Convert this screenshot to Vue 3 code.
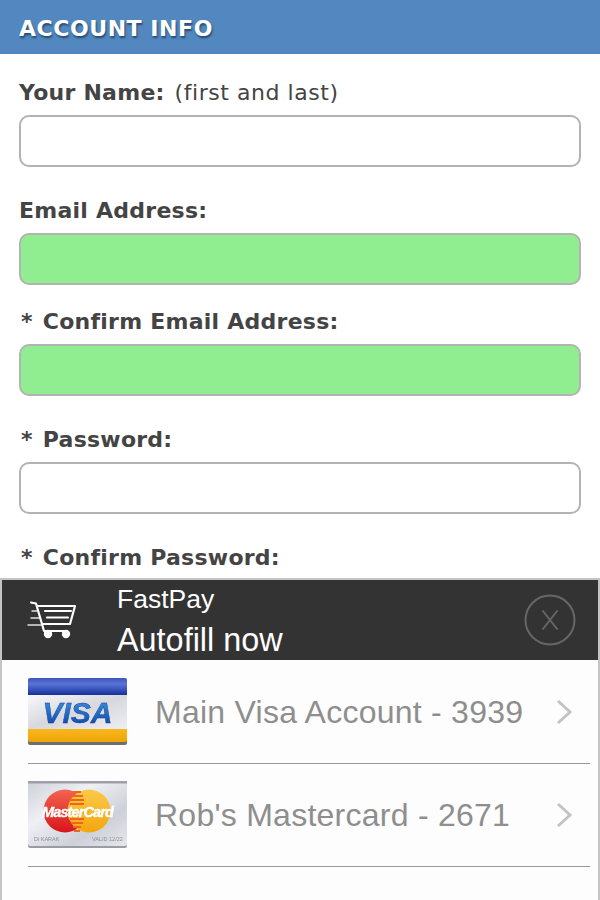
<script setup>
const fields = [
  { label: 'Your Name:', note: '(first and last)', filled: false },
  { label: 'Email Address:', filled: true, tight: true },
  { label: 'Confirm Email Address:', filled: true, star: true },
  { label: 'Password:', filled: false, star: true },
]
</script>

<template>
  <div class="page">
    <header class="band">ACCOUNT INFO</header>
    <form class="form">
      <div v-for="f in fields" :key="f.label" class="field" :class="{ tight: f.tight }">
        <div class="label" :class="{ star: f.star }"><b v-if="f.star" class="mark">*</b><b>{{ f.label }}</b><span v-if="f.note" class="note">{{ f.note }}</span></div>
        <div class="input" :class="{ filled: f.filled }"></div>
      </div>
      <div class="label star"><b class="mark">*</b><b>Confirm Password:</b></div>
    </form>

    <section class="sheet">
      <div class="sheet-head">
        <svg class="cart" viewBox="0 0 50 42" fill="none" stroke="#fff" stroke-linecap="round" stroke-linejoin="round">
          <path d="M5 3.5 L10 4.5 L18 32 H40" stroke-width="2.2"/>
          <path d="M11 7 H49 L44 25 H17" stroke-width="2.2"/>
          <path d="M19 12 H45 M21 18.5 H42" stroke-width="2.2"/>
          <path d="M6 12 H11 M5 19 H14 M2 26 H15" stroke-width="1.4" opacity=".85"/>
          <circle cx="22" cy="35" r="4.2" fill="#fff" stroke="none"/>
          <circle cx="40" cy="35" r="4.2" fill="#fff" stroke="none"/>
        </svg>
        <div class="titles">
          <div class="brand">FastPay</div>
          <div class="action">Autofill now</div>
        </div>
        <svg class="close" viewBox="0 0 52 52" fill="none" stroke="#666">
          <circle cx="26" cy="26" r="24.5" stroke-width="2"/>
          <path d="M18.5 16.5 L33.5 35.5 M33.5 16.5 L18.5 35.5" stroke-width="2"/>
        </svg>
      </div>

      <ul class="accounts">
        <li class="account">
          <svg class="card" viewBox="0 0 99 67">
            <defs>
              <linearGradient id="vb" x1="0" y1="0" x2="0" y2="1">
                <stop offset="0" stop-color="#3d55b8"/><stop offset=".35" stop-color="#5a74d6"/><stop offset="1" stop-color="#15309c"/>
              </linearGradient>
              <linearGradient id="vs" x1="0" y1="0" x2="1" y2="1">
                <stop offset="0" stop-color="#f8f8fa"/><stop offset=".5" stop-color="#d6d8de"/><stop offset="1" stop-color="#eeeff2"/>
              </linearGradient>
              <linearGradient id="vo" x1="0" y1="0" x2="0" y2="1">
                <stop offset="0" stop-color="#f9b71c"/><stop offset="1" stop-color="#eea408"/>
              </linearGradient>
              <linearGradient id="vt" x1="0" y1="0" x2="0" y2="1">
                <stop offset="0" stop-color="#3f9be8"/><stop offset="1" stop-color="#0c3fa6"/>
              </linearGradient>
            </defs>
            <rect x="0" y="1" width="99" height="66" rx="2" fill="#6e6e6e"/>
            <path d="M2 0 H97 a2 2 0 0 1 2 2 V17 H0 V2 a2 2 0 0 1 2 -2Z" fill="url(#vb)"/>
            <rect x="0" y="17" width="99" height="34" fill="url(#vs)"/>
            <path d="M0 51 H99 V62 a2 2 0 0 1 -2 2 H2 a2 2 0 0 1 -2 -2Z" fill="url(#vo)"/>
            <text x="49.5" y="45" class="visa">VISA</text>
          </svg>
          <span class="name">Main Visa Account - 3939</span>
          <svg class="chev" viewBox="0 0 16 26" fill="none" stroke="#c4c4c4" stroke-width="3"><path d="M2 2 L14 13 L2 24"/></svg>
        </li>
        <li class="account">
          <svg class="card" viewBox="0 0 99 67">
            <defs>
              <linearGradient id="ms" x1="0" y1="0" x2="1" y2="1">
                <stop offset="0" stop-color="#cdd0d8"/><stop offset=".35" stop-color="#eff0f4"/><stop offset=".7" stop-color="#ced0d9"/><stop offset="1" stop-color="#e6e7ec"/>
              </linearGradient>
              <linearGradient id="mr" x1="0" y1="0" x2="0" y2="1">
                <stop offset="0" stop-color="#f2654f"/><stop offset="1" stop-color="#d9141c"/>
              </linearGradient>
              <linearGradient id="my" x1="0" y1="0" x2="0" y2="1">
                <stop offset="0" stop-color="#fbc94a"/><stop offset="1" stop-color="#f4a60d"/>
              </linearGradient>
            </defs>
            <rect x="0" y="1" width="99" height="66" rx="2" fill="#9a9ca2"/>
            <rect x="0" y="0" width="99" height="65" rx="2" fill="url(#ms)"/>
            <rect x="0" y="0" width="99" height="2.5" fill="#9da0a6"/>
            <circle cx="37" cy="30" r="21.5" fill="url(#mr)"/>
            <circle cx="61" cy="30" r="21.5" fill="url(#my)"/>
            <path d="M45 11 H53 M43 15 H55 M42 19 H56 M42 23 H56 M42 38 H56 M43 42 H55 M45 46 H53 M46 50 H52" stroke="#f0641e" stroke-width="2"/>
            <text x="49.5" y="36" class="mc">MasterCard</text>
            <text x="6" y="60" class="tiny">Di KARAK</text>
            <text x="64" y="60" class="tiny">VALID 12/22</text>
          </svg>
          <span class="name">Rob's Mastercard - 2671</span>
          <svg class="chev" viewBox="0 0 16 26" fill="none" stroke="#c4c4c4" stroke-width="3"><path d="M2 2 L14 13 L2 24"/></svg>
        </li>
      </ul>
    </section>
  </div>
</template>

<style>
html, body { margin: 0; background: #fff; }
</style>

<style scoped>
.page {
  position: relative;
  width: 600px;
  height: 900px;
  overflow: hidden;
  background: #fff;
  font-family: "DejaVu Sans", sans-serif;
}
.band {
  height: 54px;
  box-sizing: border-box;
  padding-left: 19px;
  background: #5288bf;
  color: #fff;
  font-size: 22px;
  font-weight: 700;
  line-height: 57px;
  letter-spacing: 0.55px;
  text-shadow: 1px 2px 2px #274a70;
}
.form { padding: 23px 19px 0; }
.field { margin-bottom: 28px; }
.field.tight { margin-bottom: 21px; }
.label {
  height: 30px;
  margin-bottom: 8px;
  color: #444;
  font-size: 22px;
  line-height: 32px;
  letter-spacing: 0.25px;
  white-space: nowrap;
}
.label.star { padding-left: 2px; }
.mark { margin-right: 10px; }
.note { margin-left: 10px; font-weight: 400; letter-spacing: 0.55px; }
.input {
  box-sizing: border-box;
  height: 52px;
  border: 2px solid #b3b3b3;
  border-radius: 10px;
  background: #fff;
}
.input.filled { background: #90ee90; }

.sheet {
  position: absolute;
  left: 0;
  right: 0;
  top: 578px;
  bottom: 0;
  box-sizing: border-box;
  border: 2px solid #c4c4c4;
  border-bottom: 0;
  background: #fdfdfd;
  font-family: "Liberation Sans", sans-serif;
}
.sheet-head {
  display: flex;
  align-items: center;
  height: 80px;
  background: #333;
  color: #fff;
}
.cart { width: 50px; height: 42px; margin-left: 24px; flex: none; }
.titles { margin-left: 41px; flex: 1; padding-top: 3px; }
.brand { font-size: 26.5px; line-height: 37px; }
.action { font-size: 32.4px; line-height: 44px; }
.close { width: 52px; height: 52px; margin-right: 22px; flex: none; }
.accounts { list-style: none; margin: 0; padding: 0 8px 0 26px; }
.account {
  display: flex;
  align-items: center;
  box-sizing: border-box;
  height: 103px;
  padding-bottom: 2px;
  border-bottom: 1.5px solid #999;
}
.account:first-child { height: 104px; padding-top: 1px; }
.card { width: 99px; height: 67px; flex: none; filter: blur(0.4px); }
.name {
  flex: 1;
  margin-left: 28px;
  padding-top: 3px;
  color: #8e8e8e;
  font-size: 32px;
  letter-spacing: 0.25px;
  white-space: nowrap;
}
.chev { width: 16px; height: 26px; margin-top: 2px; margin-right: 18px; flex: none; }
.visa {
  fill: url(#vt);
  stroke: #0d3a8c;
  stroke-width: .4;
  font: italic 700 30px "Liberation Sans", sans-serif;
  text-anchor: middle;
}
.mc {
  fill: #fff;
  stroke: #fff;
  stroke-width: .35;
  font: italic 700 14.5px "Liberation Sans", sans-serif;
  letter-spacing: -0.9px;
  text-anchor: middle;
}
.tiny { fill: #8c8f96; font: 5.5px "Liberation Sans", sans-serif; }
</style>
